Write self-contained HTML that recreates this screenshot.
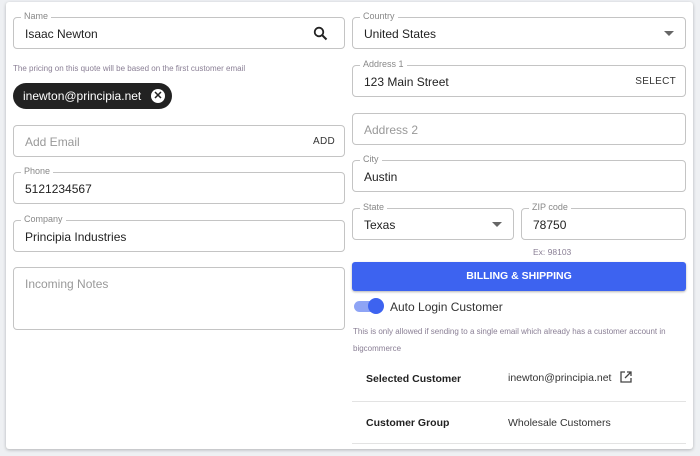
<!DOCTYPE html><html><head><style>
body{margin:0;width:700px;height:456px;background:#eef0f3;font-family:"Liberation Sans",sans-serif;position:relative;overflow:hidden}
.card{position:absolute;left:6px;top:2px;width:687px;height:447px;background:#fff;border-radius:3px;box-shadow:0 1px 3px rgba(0,0,0,.25)}
.f{position:absolute;border:1px solid #c4c4c4;border-radius:4px;box-sizing:border-box;height:32px}
.f .l{position:absolute;top:-7px;left:7px;background:#fff;padding:0 3px;font-size:9px;color:#888}
.f .v{position:absolute;left:11px;top:9px;font-size:12px;color:#222}
.f .p{color:#999}
.f .r{position:absolute;right:9px;top:10px;font-size:10px;color:#333;letter-spacing:.3px}
.t{position:absolute;font-size:12px}
.tri{position:absolute;right:11px;top:13px;width:0;height:0;border-left:5px solid transparent;border-right:5px solid transparent;border-top:5px solid #666}
</style></head><body>
<div class="card"></div>
<div class="f" style="left:13px;top:17px;width:332px"><span class="l">Name</span><span class="v">Isaac Newton</span>
<svg style="position:absolute;right:16px;top:8px" width="15" height="15" viewBox="0 0 15 15"><circle cx="6" cy="6" r="4.3" fill="none" stroke="#222" stroke-width="1.8"/><path d="M9 9l4.5 4.5" stroke="#222" stroke-width="2"/></svg></div>
<div class="t" style="left:13px;top:64px;font-size:8px;color:#8a7f95">The pricing on this quote will be based on the first customer email</div>
<div style="position:absolute;left:13px;top:83px;width:159px;height:26px;background:#222;border-radius:13px"><span style="position:absolute;left:10px;top:6px;color:#fff;font-size:12px">inewton@principia.net</span><span style="position:absolute;left:138px;top:6px;width:14px;height:14px;border-radius:7px;background:#fff;color:#222;font-size:11px;font-weight:bold;text-align:center;line-height:14px">✕</span></div>
<div class="f" style="left:13px;top:125px;width:332px"><span class="v p">Add Email</span><span class="r">ADD</span></div>
<div class="f" style="left:13px;top:172px;width:332px"><span class="l">Phone</span><span class="v">5121234567</span></div>
<div class="f" style="left:13px;top:220px;width:332px"><span class="l">Company</span><span class="v">Principia Industries</span></div>
<div class="f" style="left:13px;top:267px;width:332px;height:63px"><span class="v p">Incoming Notes</span></div>
<div class="f" style="left:352px;top:17px;width:334px"><span class="l">Country</span><span class="v">United States</span><span class="tri"></span></div>
<div class="f" style="left:352px;top:65px;width:334px"><span class="l">Address 1</span><span class="v">123 Main Street</span><span class="r">SELECT</span></div>
<div class="f" style="left:352px;top:113px;width:334px"><span class="v p">Address 2</span></div>
<div class="f" style="left:352px;top:160px;width:334px"><span class="l">City</span><span class="v">Austin</span></div>
<div class="f" style="left:352px;top:208px;width:162px"><span class="l">State</span><span class="v">Texas</span><span class="tri"></span></div>
<div class="f" style="left:521px;top:208px;width:165px"><span class="l">ZIP code</span><span class="v">78750</span></div>
<div class="t" style="left:533px;top:247px;font-size:8.5px;color:#8a7f95">Ex: 98103</div>
<div style="position:absolute;left:352px;top:262px;width:334px;height:29px;background:#3d63f0;border-radius:3px;color:#fff;font-size:10.5px;font-weight:bold;text-align:center;line-height:29px;box-shadow:0 1px 2px rgba(0,0,0,.3)">BILLING &amp; SHIPPING</div>
<div style="position:absolute;left:354px;top:301px;width:28px;height:11px;border-radius:6px;background:#8ea4f5"></div>
<div style="position:absolute;left:368px;top:298px;width:16px;height:16px;border-radius:8px;background:#3d63f0"></div>
<div class="t" style="left:390px;top:300px;font-size:12px;color:#333">Auto Login Customer</div>
<div class="t" style="left:353px;top:323px;font-size:8px;color:#8a7f95;line-height:17px;width:320px">This is only allowed if sending to a single email which already has a customer account in bigcommerce</div>
<div class="t" style="left:366px;top:373px;font-size:10.5px;font-weight:bold;color:#222">Selected Customer</div>
<div class="t" style="left:508px;top:372px;font-size:10.5px;color:#333">inewton@principia.net</div>
<svg style="position:absolute;left:620px;top:371px" width="12" height="12" viewBox="0 0 12 12"><path d="M5 1H1v10h10V7M7 1h4v4M11 1L5 7" fill="none" stroke="#444" stroke-width="1.3"/></svg>
<div style="position:absolute;left:352px;top:401px;width:334px;height:1px;background:#e3e3e3"></div>
<div class="t" style="left:366px;top:417px;font-size:10.5px;font-weight:bold;color:#222">Customer Group</div>
<div class="t" style="left:508px;top:417px;font-size:10.5px;color:#333">Wholesale Customers</div>
<div style="position:absolute;left:352px;top:443px;width:334px;height:1px;background:#e3e3e3"></div>
</body></html>
